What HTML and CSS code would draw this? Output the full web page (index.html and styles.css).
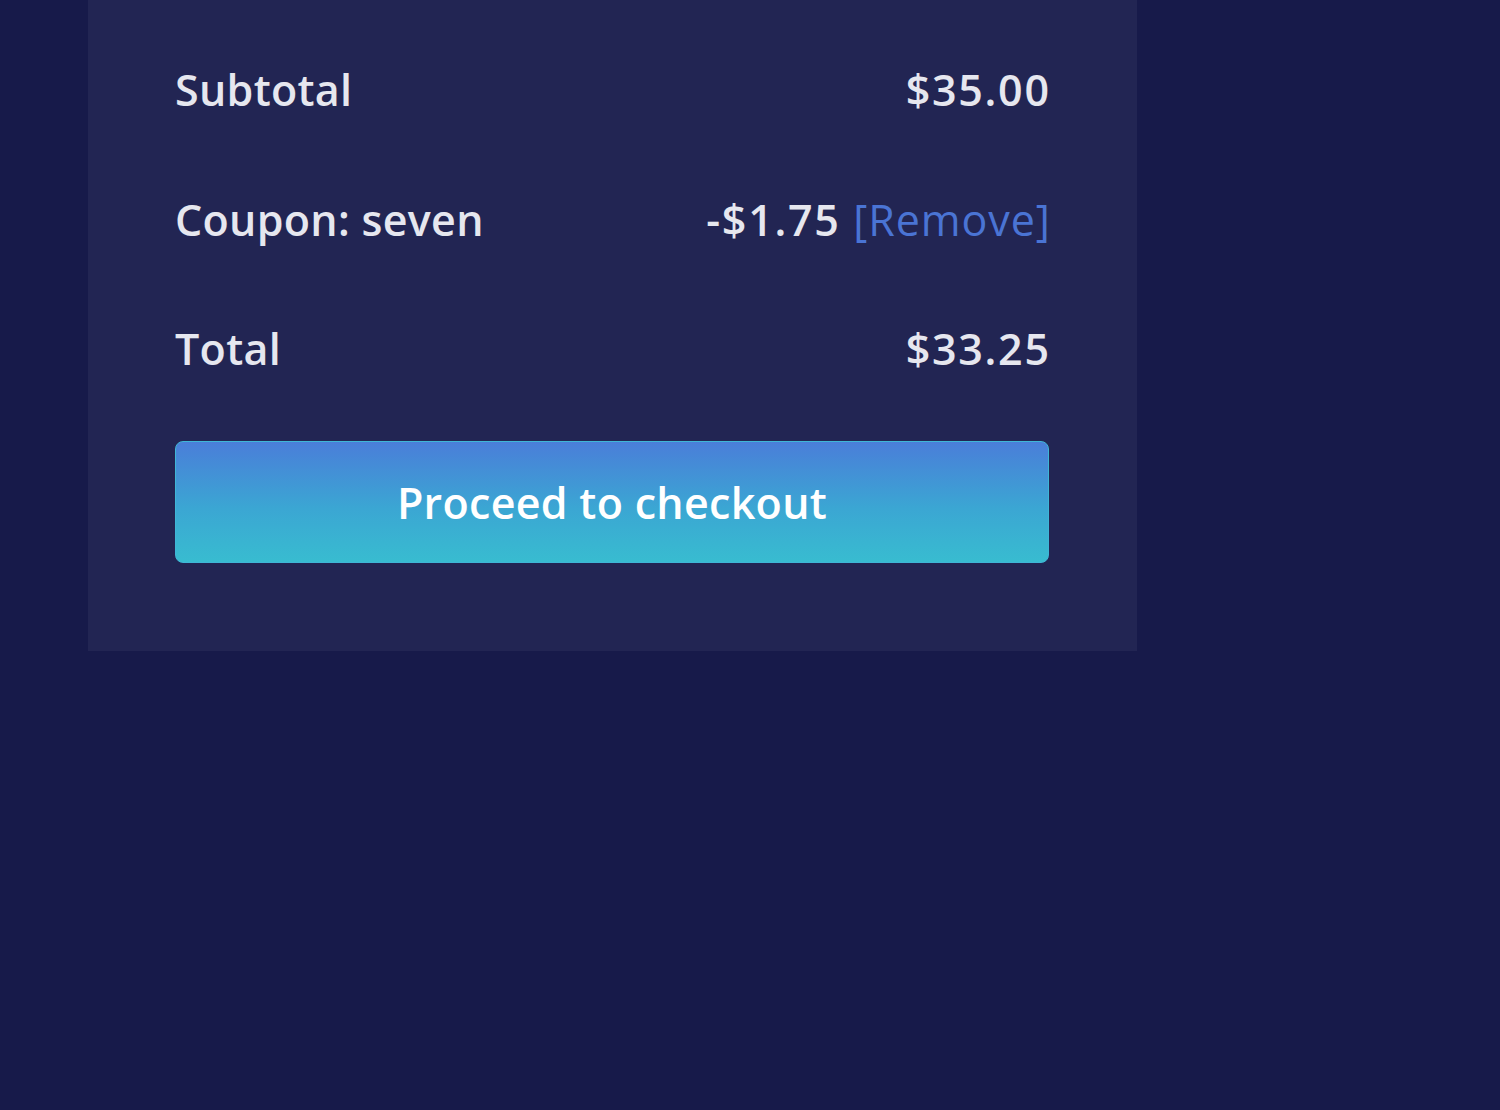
FILE: index.html
```html
<!DOCTYPE html>
<html>
<head>
<meta charset="utf-8">
<link rel="stylesheet" href="styles.css">
</head>
<body>
<div class="page">
  <section class="totals">
    <div class="row">
      <span class="label">Subtotal</span>
      <span class="value">$35.00</span>
    </div>
    <div class="row">
      <span class="label">Coupon: seven</span>
      <span class="value">-$1.75 <a class="remove" href="#">[Remove]</a></span>
    </div>
    <div class="row">
      <span class="label">Total</span>
      <span class="value">$33.25</span>
    </div>
    <button class="checkout">Proceed to checkout</button>
  </section>
</div>
</body>
</html>
```

FILE: styles.css
```css
html, body {
  margin: 0;
  padding: 0;
  background: #171a4a;
  height: 100%;
}
body {
  font-family: "Open Sans", "Noto Sans", sans-serif;
  color: #e6e7ef;
}
.page {
  padding-left: 88px;
}
.totals {
  width: 874px;
  background: #222553;
  padding: 25px 88px 88px 87px;
  display: flex;
  flex-direction: column;
}
.row {
  height: 129.5px;
  display: flex;
  justify-content: space-between;
  align-items: center;
  font-size: 43px;
  font-weight: 540;
  letter-spacing: 0.3px;
}
.value {
  letter-spacing: 1.7px;
  margin-right: -1.7px;
}
.remove {
  color: #4a74d4;
  text-decoration: none;
  font-weight: 430;
  letter-spacing: 0.9px;
}
.checkout {
  margin-top: 27.5px;
  height: 122px;
  border: 1px solid #3fb6d6;
  border-radius: 8px;
  background: linear-gradient(180deg, #4a7ed9 0%, #3ba6d3 55%, #38bcd0 100%);
  color: #ffffff;
  font-family: "Open Sans", "Noto Sans", sans-serif;
  font-size: 43px;
  font-weight: 600;
  letter-spacing: 0.3px;
  cursor: pointer;
}
```
